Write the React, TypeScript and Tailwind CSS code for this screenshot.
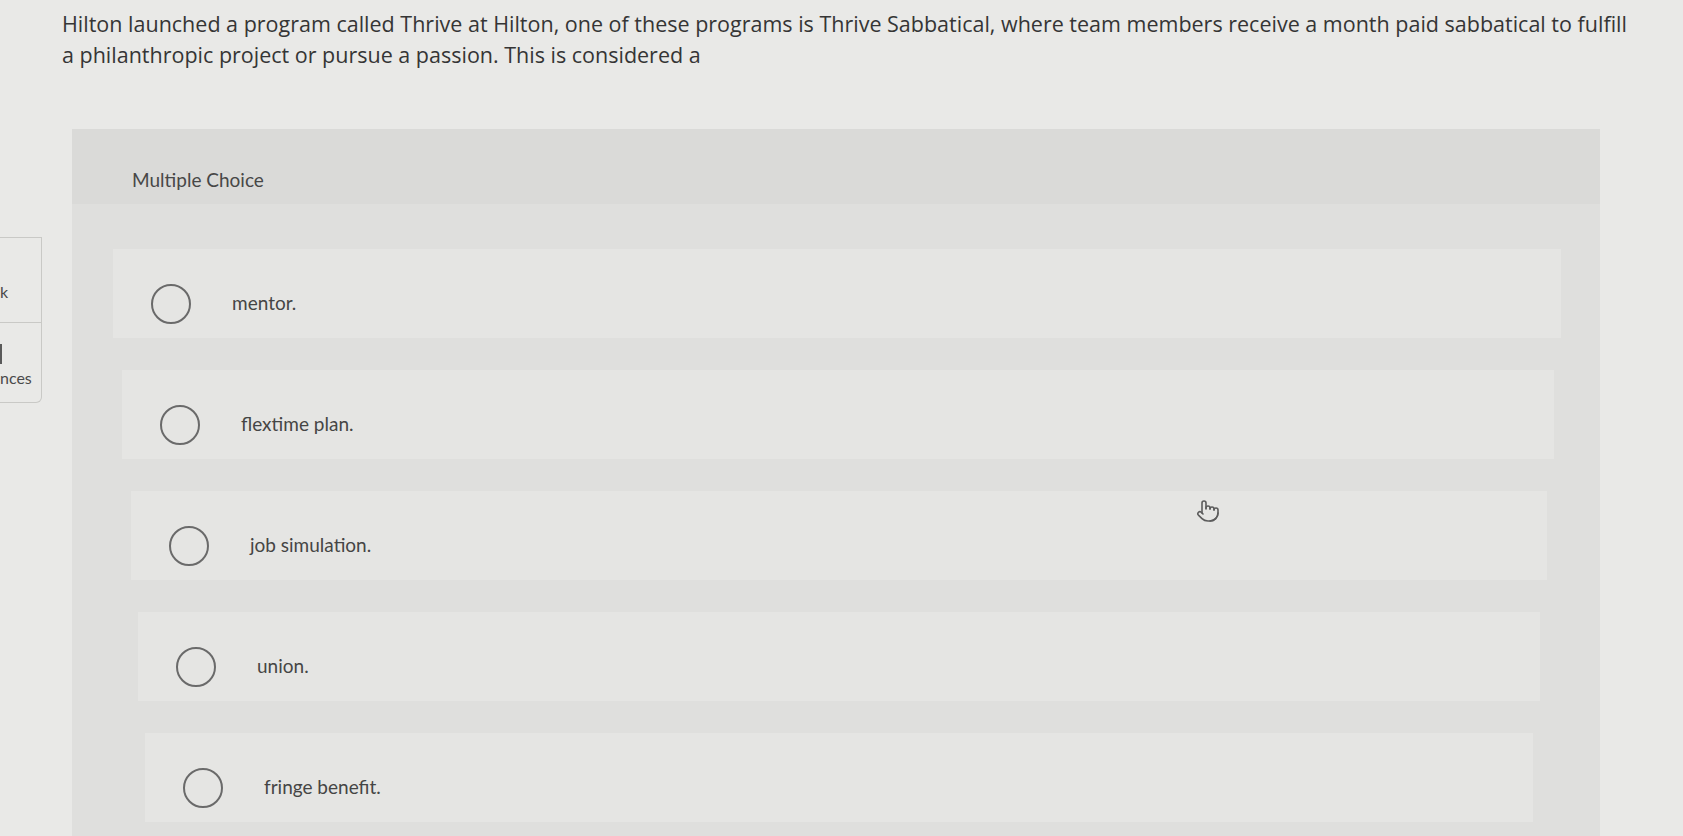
import { Pointer } from "lucide-react";

const options = [
  { label: "mentor.", row: "ml-[41px] mr-[39px]" },
  { label: "flextime plan.", row: "ml-[50px] mr-[46px]" },
  { label: "job simulation.", row: "ml-[59px] mr-[53px]" },
  { label: "union.", row: "ml-[66px] mr-[60px]" },
  { label: "fringe benefit.", row: "ml-[73px] mr-[67px]" },
];

function SideTabs() {
  return (
    <div className="w-[42px] shrink-0 pt-[237px]">
      <div className="flex h-[166px] w-[42px] flex-col rounded-br-md border-r border-b border-t border-[#c9c9c6] text-[16px] text-[#4a4a4a]">
        <div className="flex h-[84px] items-end pb-[22px] leading-none">k</div>
        <div className="flex flex-1 flex-col justify-end border-t border-[#c9c9c6] pb-[16px] leading-none">
          <div className="mb-[6px] h-[20px] w-[2px] bg-[#5a5a5a]" />
          <span>nces</span>
        </div>
      </div>
    </div>
  );
}

export default function App() {
  return (
    <div
      className="relative flex min-h-screen w-full overflow-hidden bg-[#e9e9e7]"
      style={{ fontFamily: "Lato, 'Open Sans', sans-serif" }}
    >
      <SideTabs />

      <main className="flex flex-1 flex-col">
        <p
          className="max-w-[1590px] pl-[20px] pt-[8px] text-[21.5px] leading-[31px] text-[#353535]"
          style={{ fontFamily: "'Open Sans', Lato, sans-serif" }}
        >
          Hilton launched a program called Thrive at Hilton, one of these programs is Thrive Sabbatical, where team
          members receive a month paid sabbatical to fulfill a philanthropic project or pursue a passion. This is
          considered a
        </p>

        <section className="ml-[30px] mt-[59px] w-[1528px] flex-1 bg-[#dfdfdd] pb-10">
          <div className="h-[75px] bg-[#dadad8] pl-[60px] pt-[39px] text-[19px] leading-6 text-[#474747]">
            Multiple Choice
          </div>

          <div className="mt-[45px] flex flex-col gap-[32px]">
            {options.map((o) => (
              <label
                key={o.label}
                className={`flex h-[89px] items-center bg-[#e5e5e3] pl-[38px] pt-[20px] ${o.row}`}
              >
                <span className="h-[40px] w-[40px] shrink-0 rounded-full border-2 border-[#6a6a6a]" />
                <span className="ml-[41px] text-[19px] text-[#454545]">{o.label}</span>
              </label>
            ))}
          </div>
        </section>
      </main>

      <Pointer className="absolute left-[1196px] top-[499px] text-[#5c5c5c]" size={24} strokeWidth={1.6} />
    </div>
  );
}
